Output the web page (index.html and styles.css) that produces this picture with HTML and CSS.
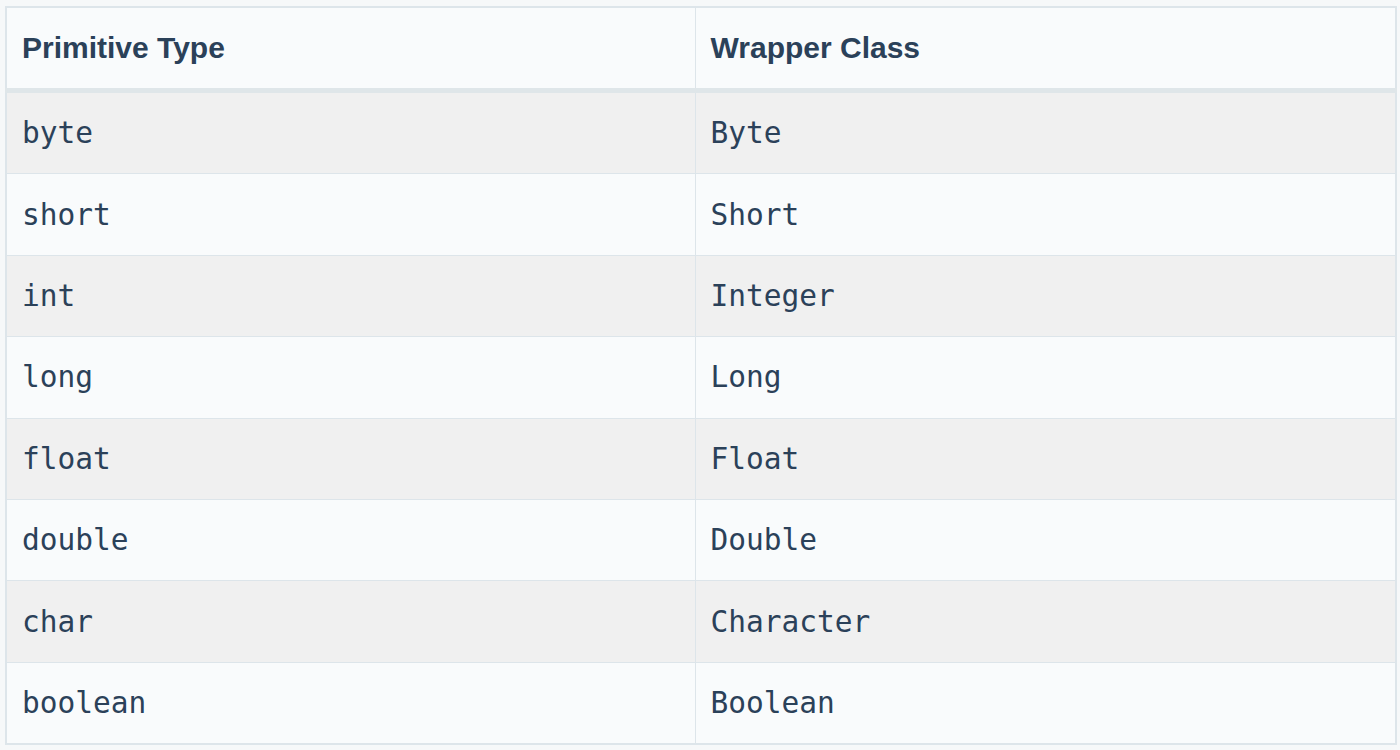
FILE: index.html
```html
<!DOCTYPE html>
<html>
<head>
<meta charset="utf-8">
<link rel="stylesheet" href="styles.css">
</head>
<body>
<table class="types">
  <colgroup><col class="c1"><col class="c2"></colgroup>
  <thead>
    <tr><th>Primitive Type</th><th>Wrapper Class</th></tr>
  </thead>
  <tbody>
    <tr class="alt"><td>byte</td><td>Byte</td></tr>
    <tr><td>short</td><td>Short</td></tr>
    <tr class="alt"><td>int</td><td>Integer</td></tr>
    <tr><td>long</td><td>Long</td></tr>
    <tr class="alt"><td>float</td><td>Float</td></tr>
    <tr><td>double</td><td>Double</td></tr>
    <tr class="alt"><td>char</td><td>Character</td></tr>
    <tr><td>boolean</td><td>Boolean</td></tr>
  </tbody>
</table>
</body>
</html>
```
FILE: styles.css
```css
html, body {
  margin: 0;
  padding: 0;
  background: #f6f8f9;
}
body {
  padding: 6px 5px 0 5px;
}
.types {
  width: 1390px;
  border-collapse: collapse;
  table-layout: fixed;
  color: #2b4159;
  border: 2px solid #dde5ea;
}
.c1 { width: 689px; }
.c2 { width: 701px; }
.types th, .types td {
  border: 1px solid #dde5ea;
  padding: 0 15px;
  text-align: left;
  vertical-align: middle;
  background: #f9fbfc;
}
.types th {
  height: 80px;
  font-family: "Liberation Sans", Arial, sans-serif;
  font-weight: 700;
  font-size: 30px;
  border-bottom: 5px solid #dfe6e9;
}
.types td {
  height: 80.4px;
  font-family: "DejaVu Sans Mono", "Liberation Mono", monospace;
  font-size: 29.5px;
}
.types tr.alt td {
  background: #f0f0f0;
}
```
